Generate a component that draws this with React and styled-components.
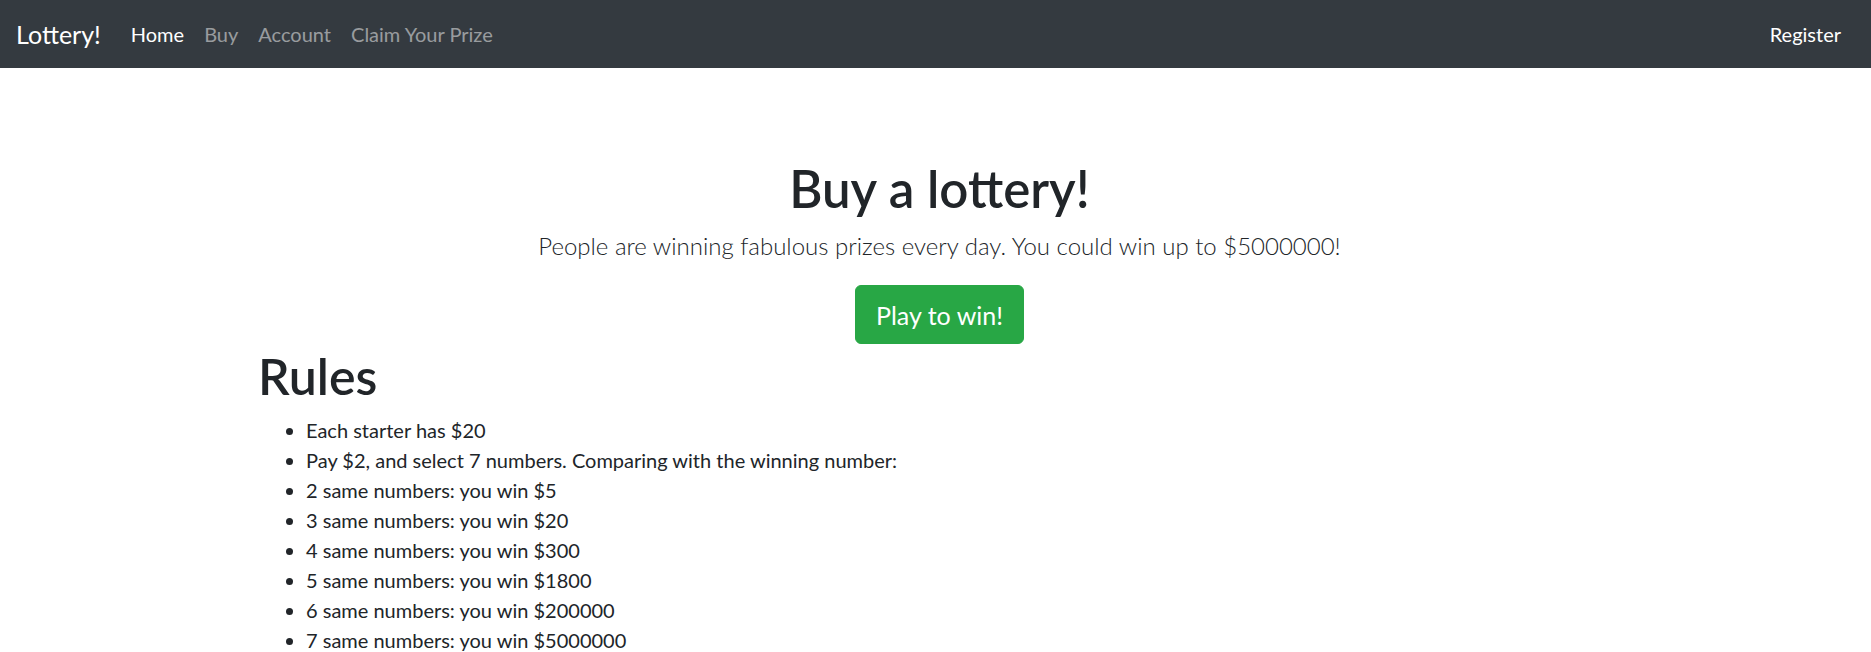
import React from "react";
import styled, { createGlobalStyle } from "styled-components";

const GlobalStyle = createGlobalStyle`
  html, body {
    margin: 0;
    padding: 0;
    overflow: hidden;
  }
  body {
    font-family: Lato, "Open Sans", sans-serif;
    font-size: 20px;
    line-height: 30px;
    color: #212529;
    background: #fff;
  }
`;

const Navbar = styled.nav`
  display: flex;
  align-items: center;
  height: 68px;
  padding: 0 20px 0 16px;
  background-color: #343a40;
`;

const Brand = styled.a`
  font-size: 25px;
  line-height: 37px;
  color: #fff;
  margin-right: 20px;
  text-decoration: none;
`;

const NavList = styled.div`
  display: flex;
  align-items: center;
  flex: 1;
`;

const NavLink = styled.a`
  padding: 0 10px;
  font-size: 20px;
  color: ${(p) => (p.$active ? "#fff" : "rgba(255, 255, 255, 0.5)")};
  text-decoration: none;
`;

const Hero = styled.section`
  display: flex;
  flex-direction: column;
  align-items: center;
  padding: 91px 0 0 8px;
  text-align: center;
`;

const Title = styled.h1`
  margin: 0 0 8px;
  font-size: 51px;
  line-height: 60px;
  font-weight: 600;
`;

const Lead = styled.p`
  margin: 0 0 21px;
  font-size: 24px;
  line-height: 37px;
  font-weight: 300;
`;

const PlayButton = styled.button`
  height: 59px;
  padding: 0 20px;
  border: 1px solid #28a745;
  border-radius: 6px;
  background-color: #28a745;
  color: #fff;
  font-family: inherit;
  font-size: 25px;
  cursor: pointer;
`;

const Container = styled.section`
  max-width: 1359px;
  margin: 2px auto 0;
`;

const SectionTitle = styled.h1`
  margin: 0 0 9px 2px;
  font-size: 50px;
  line-height: 60px;
  font-weight: 600;
`;

const RuleList = styled.ul`
  margin: 0;
  padding-left: 50px;
`;

const rules = [
  "Each starter has $20",
  "Pay $2, and select 7 numbers. Comparing with the winning number:",
  "2 same numbers: you win $5",
  "3 same numbers: you win $20",
  "4 same numbers: you win $300",
  "5 same numbers: you win $1800",
  "6 same numbers: you win $200000",
  "7 same numbers: you win $5000000",
];

export default function App() {
  return (
    <>
      <GlobalStyle />
      <Navbar>
        <Brand href="#">Lottery!</Brand>
        <NavList>
          <NavLink href="#" $active>Home</NavLink>
          <NavLink href="#">Buy</NavLink>
          <NavLink href="#">Account</NavLink>
          <NavLink href="#">Claim Your Prize</NavLink>
        </NavList>
        <NavLink href="#" $active>Register</NavLink>
      </Navbar>

      <Hero>
        <Title>Buy a lottery!</Title>
        <Lead>People are winning fabulous prizes every day. You could win up to $5000000!</Lead>
        <PlayButton>Play to win!</PlayButton>
      </Hero>

      <Container>
        <SectionTitle>Rules</SectionTitle>
        <RuleList>
          {rules.map((r) => (
            <li key={r}>{r}</li>
          ))}
        </RuleList>
      </Container>
    </>
  );
}
